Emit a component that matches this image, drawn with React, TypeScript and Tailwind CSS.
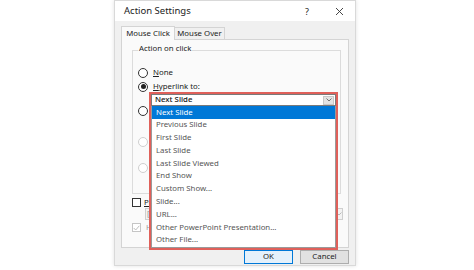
import React from "react";

const items = [
  "Next Slide",
  "Previous Slide",
  "First Slide",
  "Last Slide",
  "Last Slide Viewed",
  "End Show",
  "Custom Show...",
  "Slide...",
  "URL...",
  "Other PowerPoint Presentation...",
  "Other File...",
];

function Radio({ checked, disabled }: { checked?: boolean; disabled?: boolean }) {
  return (
    <span
      className={`flex items-center justify-center w-[10px] h-[10px] rounded-full border bg-white ${
        disabled ? "border-[#cfcfcf]" : "border-[#333]"
      }`}
    >
      {checked && <span className="w-[5px] h-[5px] rounded-full bg-[#222]" />}
    </span>
  );
}

export default function App() {
  return (
    <div
      className="relative w-[474px] h-[270px] bg-white overflow-hidden text-[#222]"
      style={{ fontFamily: '"Noto Sans", "Segoe UI", sans-serif' }}
    >
      <div className="ml-[114px] w-[242px] h-[266px] bg-[#f0f0f0] border border-[#d9d9d9] flex flex-col shadow-[0_0_4px_rgba(0,0,0,0.12)]">
        {/* title bar */}
        <div className="h-[20px] bg-white flex items-center pl-[9px] shrink-0">
          <span className="text-[9.5px] leading-none">Action Settings</span>
          <span className="ml-auto text-[9px] leading-none mr-[26px]">?</span>
          <svg width="9" height="9" viewBox="0 0 9 9" className="mr-[11px]">
            <path d="M1 1L8 8M8 1L1 8" stroke="#333" strokeWidth="0.9" />
          </svg>
        </div>
        {/* body */}
        <div className="flex flex-col px-[6px] pt-[4px]">
          <div className="flex items-end h-[14px] text-[7.8px] leading-none">
            <div className="h-[14px] w-[54px] justify-center flex items-center bg-[#fafafa] border border-b-0 border-[#d4d4d4] relative z-10 -mb-px">
              Mouse Click
            </div>
            <div className="h-[12px] w-[50px] justify-center flex items-center border border-l-0 border-b-0 border-[#d4d4d4] bg-[#f0f0f0]">
              Mouse Over
            </div>
          </div>
          <div className="h-[209px] border border-[#d4d4d4] bg-[#fafafa] pt-[10px] px-[10px]">
            {/* group */}
            <div className="relative h-[144px] border border-[#dcdcdc] pt-[15px] pl-[5px] mr-[-3px]">
              <span className="absolute -top-[6px] left-[5px] px-[1px] bg-[#fafafa] text-[7.8px] leading-none">
                Action on click
              </span>
              <div className="flex flex-col text-[7.8px] leading-none">
                <div className="flex items-center gap-[5px] h-[13px]">
                  <Radio />
                  <span><span className="underline">N</span>one</span>
                </div>
                <div className="flex items-center gap-[5px] h-[13px] mt-[1px]">
                  <Radio checked />
                  <span><span className="underline">H</span>yperlink to:</span>
                </div>
                <div className="flex items-center h-[13px] mt-[11px]">
                  <Radio />
                </div>
                <div className="flex items-center h-[13px] mt-[18px]">
                  <Radio disabled />
                </div>
                <div className="flex items-center h-[13px] mt-[13px]">
                  <Radio disabled />
                </div>
              </div>
            </div>
            {/* play sound */}
            <div className="flex items-center gap-[3px] mt-[3px] h-[11px] text-[7.8px] leading-none">
              <span className="w-[9px] h-[9px] border border-[#333] bg-white" />
              <span className="underline">Pl</span>
            </div>
            <div className="ml-[13px] mr-[-5px] h-[12px] border border-[#cfcfcf] bg-[#f3f3f3] flex items-center text-[7.8px] text-[#999] pl-[1px]">
              <span>[</span>
              <span className="ml-auto w-[7px] h-[10px] border-l border-[#cfcfcf] flex items-center justify-center">
                <svg width="6" height="4" viewBox="0 0 6 4">
                  <path d="M0.5 0.5L3 3L5.5 0.5" stroke="#aaa" strokeWidth="0.8" fill="none" />
                </svg>
              </span>
            </div>
            <div className="flex items-center gap-[5px] mt-[2px] h-[11px] text-[7.8px] leading-none text-[#9a9a9a]">
              <span className="w-[9px] h-[9px] border border-[#c5c5c5] bg-white flex items-center justify-center">
                <svg width="7" height="6" viewBox="0 0 7 6">
                  <path d="M0.7 3L2.7 5L6.3 0.8" stroke="#b5b5b5" strokeWidth="0.9" fill="none" />
                </svg>
              </span>
              <span>H</span>
            </div>
          </div>
          {/* buttons */}
          <div className="flex justify-end gap-[7px] mt-[2px] text-[7.8px] leading-none">
            <div className="w-[49px] h-[14px] border border-[#0078d7] bg-[#e5f1fb] flex items-center justify-center">
              OK
            </div>
            <div className="w-[49px] h-[14px] border border-[#adadad] bg-[#e1e1e1] flex items-center justify-center">
              Cancel
            </div>
          </div>
        </div>
      </div>

      {/* dropdown overlay with red highlight */}
      <div className="absolute left-[149px] top-[92px] w-[189px] border-2 border-[#e0605a] bg-white">
        <div className="h-[12px] flex items-center border border-[#7a7a7a] bg-white pl-[3px]">
          <span className="text-[7.8px] leading-none font-medium text-[#111]">Next Slide</span>
          <span className="ml-auto mr-[1px] w-[11px] h-[9px] bg-[#e3e3e3] border border-[#c8c8c8] flex items-center justify-center">
            <svg width="6" height="4" viewBox="0 0 6 4">
              <path d="M0.5 0.5L3 3L5.5 0.5" stroke="#555" strokeWidth="0.8" fill="none" />
            </svg>
          </span>
        </div>
        <div className="flex flex-col border border-t-0 border-[#9a9a9a]">
          {items.map((it, i) => (
            <div
              key={it}
              className={`h-[12.8px] flex items-center pl-[4px] text-[7.8px] leading-none ${
                i === 0 ? "bg-[#0078d7] text-white" : "text-[#555]"
              }`}
            >
              {it}
            </div>
          ))}
        </div>
      </div>
    </div>
  );
}
